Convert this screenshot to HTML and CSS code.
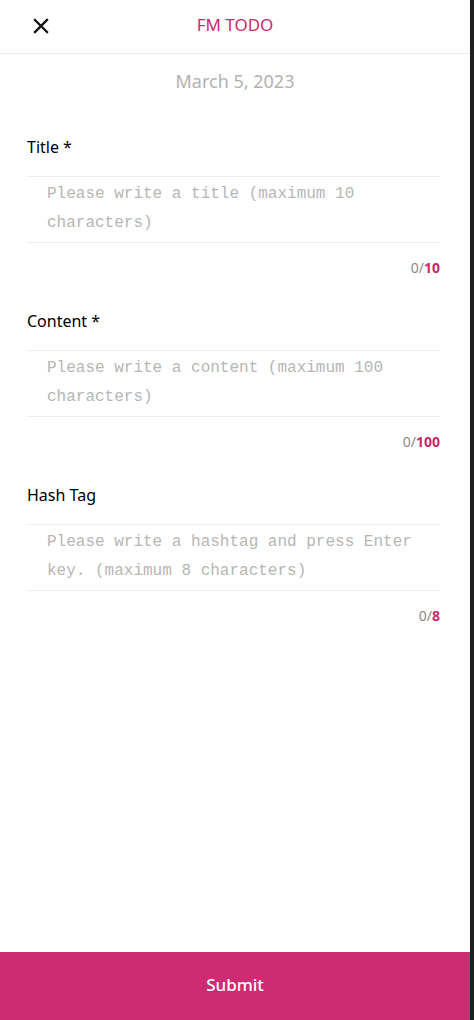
FILE: index.html
```html
<!DOCTYPE html>
<html lang="en">
<head>
<meta charset="utf-8">
<title>FM TODO</title>
<link rel="stylesheet" href="styles.css">
</head>
<body>
<div class="app">
  <header class="header">
    <button class="close" aria-label="Close">
      <svg width="16" height="16" viewBox="0 0 16 16"><path d="M2 2 L14 14 M14 2 L2 14" stroke="#111" stroke-width="2.3" stroke-linecap="square" fill="none"/></svg>
    </button>
    <h1 class="brand">FM TODO</h1>
  </header>
  <p class="date">March 5, 2023</p>
  <form class="form">
    <div class="field">
      <label class="label">Title *</label>
      <textarea class="input" placeholder="Please write a title (maximum 10 characters)"></textarea>
      <div class="count"><span class="cur">0/</span><span class="max">10</span></div>
    </div>
    <div class="field">
      <label class="label">Content *</label>
      <textarea class="input" placeholder="Please write a content (maximum 100 characters)"></textarea>
      <div class="count"><span class="cur">0/</span><span class="max">100</span></div>
    </div>
    <div class="field">
      <label class="label">Hash Tag</label>
      <textarea class="input" placeholder="Please write a hashtag and press Enter key. (maximum 8 characters)"></textarea>
      <div class="count"><span class="cur">0/</span><span class="max">8</span></div>
    </div>
  </form>
  <button class="submit">Submit</button>
</div>
</body>
</html>
```

FILE: styles.css
```css
html, body {
  margin: 0;
  padding: 0;
  height: 100%;
}
body {
  background: #1f1f1f;
  font-family: "Noto Sans", "Open Sans", sans-serif;
}
.app {
  width: 470px;
  min-height: 1020px;
  background: #fff;
  display: flex;
  flex-direction: column;
}
.header {
  height: 53px;
  border-bottom: 1px solid #e9e9e9;
  display: flex;
  align-items: center;
  position: relative;
}
.close {
  position: absolute;
  left: 33px;
  top: 18px;
  width: 16px;
  height: 16px;
  padding: 0;
  border: 0;
  background: none;
  display: flex;
}
.brand {
  margin: 0;
  width: 100%;
  text-align: center;
  font-size: 17px;
  font-weight: 400;
  color: #c9296e;
  line-height: 24px;
  padding-bottom: 3px;
}
.date {
  margin: 14px 0 0;
  text-align: center;
  font-size: 18px;
  line-height: 26px;
  color: #b2b2b2;
}
.form {
  padding: 41px 30px 0 27px;
  display: flex;
  flex-direction: column;
  gap: 31px;
}
.field {
  display: flex;
  flex-direction: column;
}
.label {
  font-size: 16px;
  line-height: 24px;
  color: #000;
}
.input {
  margin-top: 17px;
  height: 67px;
  box-sizing: border-box;
  border: 0;
  border-top: 1px solid #ececec;
  border-bottom: 1px solid #ececec;
  padding: 3px 20px 0;
  font-family: "Liberation Mono", "Courier New", monospace;
  font-size: 16px;
  line-height: 29px;
  resize: none;
  outline: none;
  overflow: hidden;
  color: #333;
  background: #fff;
}
.input::placeholder {
  color: #b6b6b6;
}
.count {
  margin-top: 15px;
  text-align: right;
  font-size: 14px;
  line-height: 20px;
}
.cur {
  color: #8a8a8a;
}
.max {
  color: #c9296e;
  font-weight: 700;
}
.submit {
  margin-top: auto;
  height: 68px;
  border: 0;
  background: #cd2b72;
  color: #fff;
  font-family: "Noto Sans", "Open Sans", sans-serif;
  font-size: 17px;
  font-weight: 500;
  padding: 0 0 3px;
}
```
